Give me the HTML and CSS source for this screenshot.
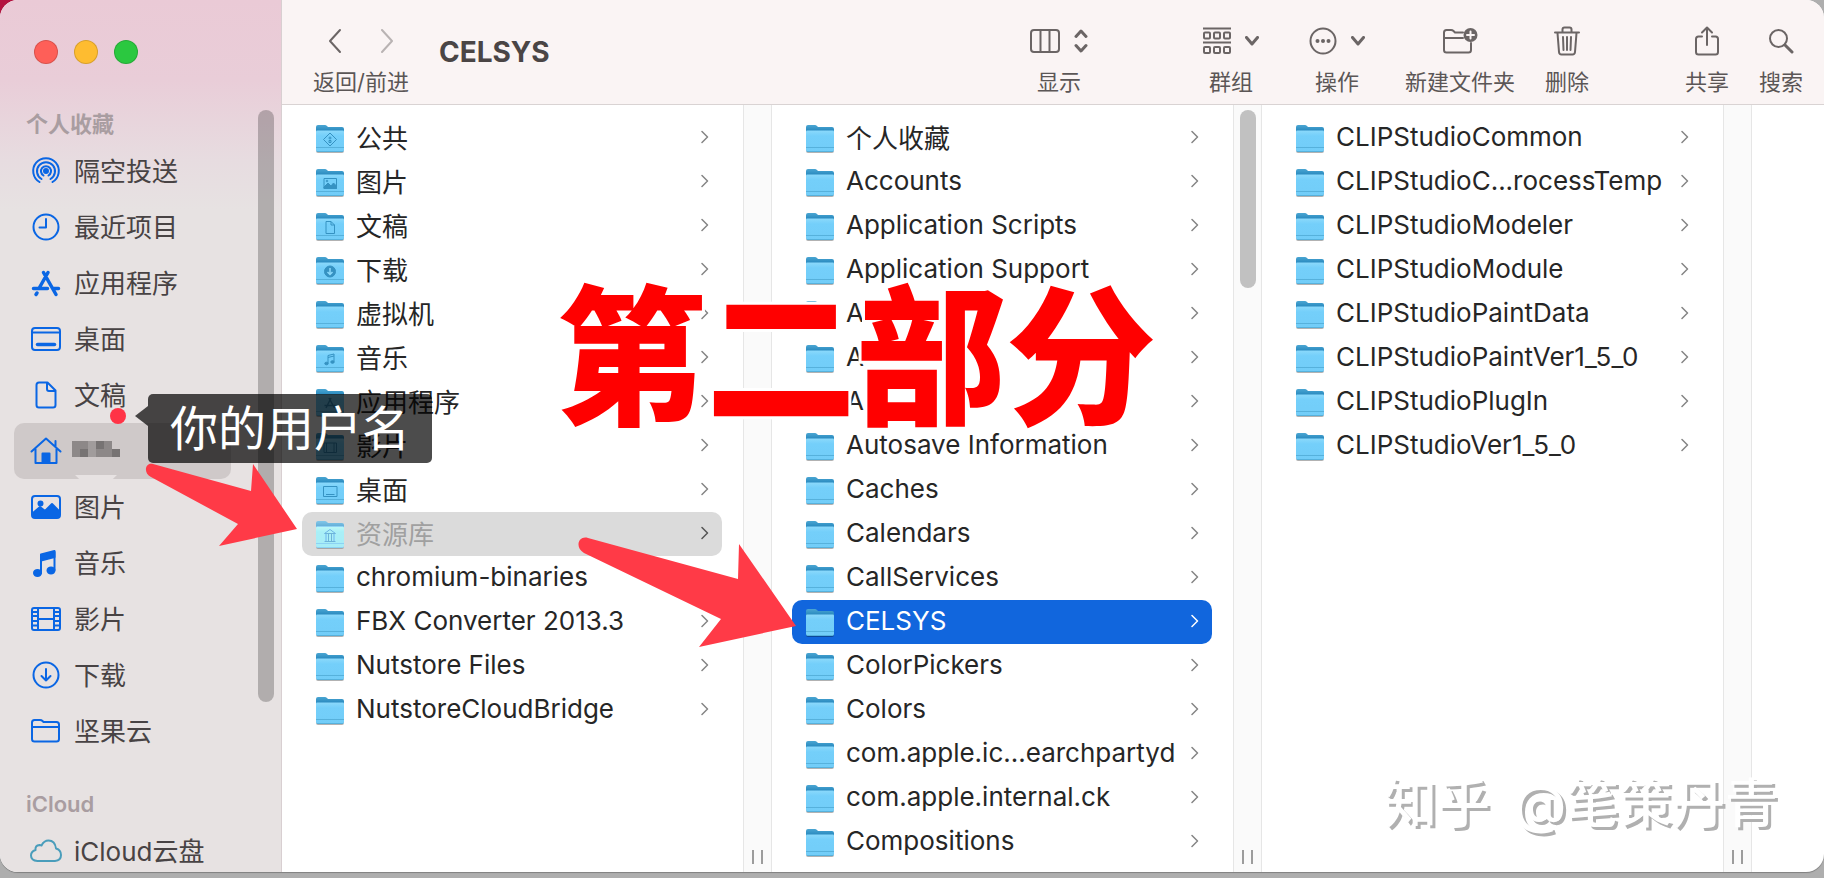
FILE: index.html
```html
<!DOCTYPE html>
<html lang="zh-CN">
<head>
    <meta charset="utf-8">
    <title>CELSYS</title>
    <link rel="stylesheet" href="styles.css">
</head>
<body>
    <!-- icons -->
    <svg class="defs" width="0" height="0" aria-hidden="true">
        <defs>
            <linearGradient id="front" x1="0" y1="0" x2="0" y2="1">
                <stop offset="0" stop-color="#8bd9fb"/>
                <stop offset=".25" stop-color="#74cffa"/>
                <stop offset="1" stop-color="#72cdf8"/>
            </linearGradient>
            <linearGradient id="back" x1="0" y1="0" x2="0" y2="1">
                <stop offset="0" stop-color="#4ba6d3"/>
                <stop offset="1" stop-color="#1579b3"/>
            </linearGradient>
        </defs>
        <symbol id="folder" viewBox="0 0 30 30">
            <rect x="1" y="8" width="28" height="21" rx="2" fill="#000" opacity=".3"/>
            <path d="M1 3q0-2 2-2h7q1 0 2 1l1 1h14q2 0 2 2v5H1z" fill="url(#back)"/>
            <path d="M1 7.500q0-1 1-1h26q1 0 1 1V26q0 2-2 2H3q-2 0-2-2z" fill="url(#front)"/>
            <path d="M1 23.500h28M2 27.500h26" stroke="#4fa9d4" stroke-width=".8"/>
        </symbol>
        <symbol id="b-public" viewBox="0 0 30 30"><path d="M15 9l6.500 6.500L15 22l-6.500-6.500z"/><circle cx="15" cy="14" r="1"/><path d="M14 16.500h2v2h-2z"/></symbol>
        <symbol id="b-pic" viewBox="0 0 30 30"><path d="M9 10.500h12.500v10H9z"/><path d="M9 19l4-4 3 3 2.500-3 3 3v2.500H9z" fill="#3592c2"/><circle cx="12" cy="13" r=".8"/></symbol>
        <symbol id="b-doc" viewBox="0 0 30 30"><path d="M11 9.500h5l3.500 3.500v8.500H11zM16 9.500V13h3.500"/></symbol>
        <symbol id="b-down" viewBox="0 0 30 30"><circle cx="15" cy="15.500" r="5.500" fill="#3592c2"/><path d="M15 12v6M12.500 16l2.500 2.500 2.500-2.500" stroke="#8bd9fb" stroke-width="1.500"/></symbol>
        <symbol id="b-music" viewBox="0 0 30 30"><path d="M13 19v-7.500l6-1.500v7.500M13 13.500l6-1.500"/><ellipse cx="11.500" cy="19.500" rx="1.700" ry="1.300" fill="#3592c2"/><ellipse cx="17.500" cy="18" rx="1.700" ry="1.300" fill="#3592c2"/></symbol>
        <symbol id="b-app" viewBox="0 0 30 30"><path d="M16 10l-5 10M14 10l5.500 10M9.500 17.500h11" stroke-width="1.500"/></symbol>
        <symbol id="b-movie" viewBox="0 0 30 30"><path d="M9 11h12.500v9.500H9zM11.500 11v9.500M19 11v9.500"/></symbol>
        <symbol id="b-desk" viewBox="0 0 30 30"><path d="M8.500 10.500h13.500v10H8.500zM11 18.500h8.500"/></symbol>
        <symbol id="b-lib" viewBox="0 0 30 30"><path d="M9.500 13.500l5.500-4 5.500 4zM11 14v7M13.500 14v7M16.500 14v7M19 14v7M9.500 21.500h11"/></symbol>
        <symbol id="chev" viewBox="0 0 8 14"><path d="M1 1.500L6.500 7 1 12.500" fill="none" stroke="currentColor" stroke-width="1.500" stroke-linecap="round" stroke-linejoin="round"/></symbol>
        <symbol id="caret" viewBox="0 0 14 10"><path d="M1.500 1.500L7 8l5.500-6.500" fill="none" stroke="currentColor" stroke-width="3" stroke-linecap="round" stroke-linejoin="round"/></symbol>
    </svg>

    <div class="window">
        <aside class="sidebar">
            <div class="lights">
                <button class="light red" aria-label="关闭"></button>
                <button class="light yellow" aria-label="最小化"></button>
                <button class="light green" aria-label="全屏"></button>
            </div>
            <nav class="places">
                <h2>个人收藏</h2>
                <a href="#"><svg viewBox="0 0 32 32"><circle cx="16" cy="16" r="2" class="fill"/><path d="M13.500 20.500a5 5 0 1 1 5 0M11.500 24a9 9 0 1 1 9 0M9.500 27a12.800 12.800 0 1 1 13 0"/></svg>隔空投送</a>
                <a href="#"><svg viewBox="0 0 32 32"><circle cx="16" cy="16" r="12.500"/><path d="M16 8v8.500H9.500"/></svg>最近项目</a>
                <a href="#"><svg viewBox="0 0 32 32"><path d="M18 5.500L9.500 20.500M7 26l-1 1.500M13.500 5.500L26 27.500M3.500 21.500h14M23.500 21.500h5" stroke-width="3.500"/></svg>应用程序</a>
                <a href="#"><svg viewBox="0 0 32 32"><rect x="2" y="5" width="28" height="22" rx="3"/><path d="M2 9.500h28"/><path d="M7.500 21.500h17" stroke-width="3.500"/></svg>桌面</a>
                <a href="#"><svg viewBox="0 0 32 32"><path d="M9 3.500h8.500l8 8V26q0 2.500-2.500 2.500H9Q6.500 28.500 6.500 26V6Q6.500 3.500 9 3.500zM17 4v6q0 2 2 2h6"/></svg>文稿</a>
                <a href="#" class="current" aria-label="个人"><svg viewBox="0 0 32 32"><path d="M1.500 16.500L16 3.500l14.500 13M5.500 14v14h21V14M25.500 11V6"/><path d="M12.500 28v-9.500h7V28z" class="fill"/></svg><span class="mosaic"><i></i><i></i><i></i><i></i><i></i><i></i><i></i><i></i><i></i><i></i><i></i><i></i></span></a>
                <a href="#"><svg viewBox="0 0 32 32"><rect x="2" y="5" width="28" height="22" rx="3"/><circle cx="10.500" cy="12.500" r="2" class="fill"/><path d="M3 25v-3l7-6 5 4 7-7 7 7v5q0 1-1 1H4q-1 0-1-1z" class="fill"/></svg>图片</a>
                <a href="#"><svg viewBox="0 0 32 32"><path d="M11 26V8.500L24.500 5v18"/><path d="M11 7.500L24.500 4v6L11 13.500z" class="fill"/><ellipse cx="7.500" cy="26" rx="3.500" ry="3" class="fill"/><ellipse cx="21" cy="23.500" rx="3.500" ry="3" class="fill"/></svg>音乐</a>
                <a href="#"><svg viewBox="0 0 32 32"><rect x="2" y="5" width="28" height="22" rx="2"/><path d="M8 5v22M24 5v22M8 16h16M2 9h6M2 13h6M2 18h6M2 22.500h6M24 9h6M24 13h6M24 18h6M24 22.500h6"/></svg>影片</a>
                <a href="#"><svg viewBox="0 0 32 32"><circle cx="16" cy="16" r="12.500"/><path d="M16 10v11.500M11.500 17l4.500 4.500 4.500-4.500"/></svg>下载</a>
                <a href="#"><svg viewBox="0 0 32 32"><path d="M2 24V7.500Q2 5 4.500 5H10q1.500 0 2.500 1l1 1h13q2.500 0 2.500 2.500V24q0 2.500-2.500 2.500h-22Q2 26.500 2 24zM2 12h27"/></svg>坚果云</a>
                <h2 class="cloud-head">iCloud</h2>
                <a href="#"><svg viewBox="0 0 32 32" class="teal"><path d="M7.500 26Q1 25.500 1 20.500q0-4 4.500-5.500-.5-4.500 4-5 1.500 0 2 .5Q14 5.500 18.500 5.500q6.500 0 7.500 8 5 1.500 5 6.500 0 5.500-6 6z"/></svg>iCloud云盘</a>
            </nav>
            <div class="scroll"></div>
        </aside>

        <main class="main">
            <header class="toolbar">
                <div class="nav">
                    <div class="arrows">
                        <button aria-label="返回"><svg width="14" height="26" viewBox="0 0 14 26"><path d="M12 2L2 13l10 11"/></svg></button>
                        <button aria-label="前进" class="off"><svg width="14" height="26" viewBox="0 0 14 26"><path d="M2 2l10 11L2 24"/></svg></button>
                    </div>
                    <span class="label">返回/前进</span>
                </div>
                <h1>CELSYS</h1>
                <button class="tool menu">
                    <span class="ico"><svg width="30" height="28" viewBox="0 0 30 28"><rect x="1" y="3" width="28" height="22" rx="3"/><path d="M10.500 3v22M19.500 3v22"/></svg><svg width="14" height="28" viewBox="0 0 14 28"><path d="M2 9.500L7 4l5 5.500M2 18.500L7 24l5-5.500" class="bold"/></svg></span>
                    <span class="label">显示</span>
                </button>
                <button class="tool menu apart">
                    <span class="ico"><svg width="28" height="28" viewBox="0 0 28 28"><path d="M0 1.500h28M0 15.500h28"/><rect x="1" y="5.500" width="6" height="6" rx="1"/><rect x="11" y="5.500" width="6" height="6" rx="1"/><rect x="21" y="5.500" width="6" height="6" rx="1"/><rect x="1" y="20" width="6" height="6" rx="1"/><rect x="11" y="20" width="6" height="6" rx="1"/><rect x="21" y="20" width="6" height="6" rx="1"/></svg><svg width="14" height="10"><use href="#caret"/></svg></span>
                    <span class="label">群组</span>
                </button>
                <button class="tool menu">
                    <span class="ico"><svg width="28" height="28" viewBox="0 0 28 28"><circle cx="14" cy="14" r="12.500"/><g class="dots"><circle cx="8.500" cy="14" r="2"/><circle cx="14" cy="14" r="2"/><circle cx="19.500" cy="14" r="2"/></g></svg><svg width="14" height="10"><use href="#caret"/></svg></span>
                    <span class="label">操作</span>
                </button>
                <button class="tool">
                    <span class="ico"><svg width="36" height="28" viewBox="0 0 36 28"><path d="M29 16v7q0 2.500-2.500 2.500h-22Q2 25.500 2 23V5.500Q2 3 4.500 3H9q1.500 0 2.500 1l1.500 1.500h8M2 11h19"/><circle cx="28.500" cy="8" r="7" class="dots"/><path d="M28.500 4.500v7M25 8h7" class="plus"/></svg></span>
                    <span class="label">新建文件夹</span>
                </button>
                <button class="tool">
                    <span class="ico"><svg width="26" height="30" viewBox="0 0 26 30"><path d="M1 6.500h24M8.500 6V3.500q0-2 2-2h5q2 0 2 2V6M3.500 7l1.500 19q.2 2.500 2.500 2.500h11q2.300 0 2.500-2.500L22.500 7M9 11l.5 13M13 11v13M17 11l-.5 13"/></svg></span>
                    <span class="label">删除</span>
                </button>
                <button class="tool apart">
                    <span class="ico"><svg width="26" height="30" viewBox="0 0 26 30"><path d="M8 10.500H4.500Q2 10.500 2 13v13q0 2.500 2.500 2.500h17Q24 28.500 24 26V13q0-2.500-2.500-2.500H18M13 19V2M8 6.500l5-5 5 5"/></svg></span>
                    <span class="label">共享</span>
                </button>
                <button class="tool">
                    <span class="ico"><svg width="26" height="26" viewBox="0 0 26 26"><circle cx="10.500" cy="10.500" r="8.500"/><path d="M17 17l7 7" class="bold"/></svg></span>
                    <span class="label">搜索</span>
                </button>
            </header>

            <div class="columns">
                <section class="column">
                    <ul>
                        <li><a href="#"><svg class="folder"><use href="#folder"/><use href="#b-public"/></svg>公共<svg class="chev"><use href="#chev"/></svg></a></li>
                        <li><a href="#"><svg class="folder"><use href="#folder"/><use href="#b-pic"/></svg>图片<svg class="chev"><use href="#chev"/></svg></a></li>
                        <li><a href="#"><svg class="folder"><use href="#folder"/><use href="#b-doc"/></svg>文稿<svg class="chev"><use href="#chev"/></svg></a></li>
                        <li><a href="#"><svg class="folder"><use href="#folder"/><use href="#b-down"/></svg>下载<svg class="chev"><use href="#chev"/></svg></a></li>
                        <li><a href="#"><svg class="folder"><use href="#folder"/></svg>虚拟机<svg class="chev"><use href="#chev"/></svg></a></li>
                        <li><a href="#"><svg class="folder"><use href="#folder"/><use href="#b-music"/></svg>音乐<svg class="chev"><use href="#chev"/></svg></a></li>
                        <li><a href="#"><svg class="folder"><use href="#folder"/><use href="#b-app"/></svg>应用程序<svg class="chev"><use href="#chev"/></svg></a></li>
                        <li><a href="#"><svg class="folder"><use href="#folder"/><use href="#b-movie"/></svg>影片<svg class="chev"><use href="#chev"/></svg></a></li>
                        <li><a href="#"><svg class="folder"><use href="#folder"/><use href="#b-desk"/></svg>桌面<svg class="chev"><use href="#chev"/></svg></a></li>
                        <li><a href="#" class="open"><svg class="folder"><use href="#folder"/><use href="#b-lib"/></svg>资源库<svg class="chev"><use href="#chev"/></svg></a></li>
                        <li><a href="#"><svg class="folder"><use href="#folder"/></svg>chromium-binaries<svg class="chev"><use href="#chev"/></svg></a></li>
                        <li><a href="#"><svg class="folder"><use href="#folder"/></svg>FBX Converter 2013.3<svg class="chev"><use href="#chev"/></svg></a></li>
                        <li><a href="#"><svg class="folder"><use href="#folder"/></svg>Nutstore Files<svg class="chev"><use href="#chev"/></svg></a></li>
                        <li><a href="#"><svg class="folder"><use href="#folder"/></svg>NutstoreCloudBridge<svg class="chev"><use href="#chev"/></svg></a></li>
                    </ul>
                    <div class="gutter"><span class="grip"></span></div>
                </section>

                <section class="column">
                    <ul>
                        <li><a href="#"><svg class="folder"><use href="#folder"/></svg>个人收藏<svg class="chev"><use href="#chev"/></svg></a></li>
                        <li><a href="#"><svg class="folder"><use href="#folder"/></svg>Accounts<svg class="chev"><use href="#chev"/></svg></a></li>
                        <li><a href="#"><svg class="folder"><use href="#folder"/></svg>Application Scripts<svg class="chev"><use href="#chev"/></svg></a></li>
                        <li><a href="#"><svg class="folder"><use href="#folder"/></svg>Application Support<svg class="chev"><use href="#chev"/></svg></a></li>
                        <li><a href="#"><svg class="folder"><use href="#folder"/></svg>A<svg class="chev"><use href="#chev"/></svg></a></li>
                        <li><a href="#"><svg class="folder"><use href="#folder"/></svg>A<svg class="chev"><use href="#chev"/></svg></a></li>
                        <li><a href="#"><svg class="folder"><use href="#folder"/></svg>A<svg class="chev"><use href="#chev"/></svg></a></li>
                        <li><a href="#"><svg class="folder"><use href="#folder"/></svg>Autosave Information<svg class="chev"><use href="#chev"/></svg></a></li>
                        <li><a href="#"><svg class="folder"><use href="#folder"/></svg>Caches<svg class="chev"><use href="#chev"/></svg></a></li>
                        <li><a href="#"><svg class="folder"><use href="#folder"/></svg>Calendars<svg class="chev"><use href="#chev"/></svg></a></li>
                        <li><a href="#"><svg class="folder"><use href="#folder"/></svg>CallServices<svg class="chev"><use href="#chev"/></svg></a></li>
                        <li><a href="#" class="selected"><svg class="folder"><use href="#folder"/></svg>CELSYS<svg class="chev"><use href="#chev"/></svg></a></li>
                        <li><a href="#"><svg class="folder"><use href="#folder"/></svg>ColorPickers<svg class="chev"><use href="#chev"/></svg></a></li>
                        <li><a href="#"><svg class="folder"><use href="#folder"/></svg>Colors<svg class="chev"><use href="#chev"/></svg></a></li>
                        <li><a href="#"><svg class="folder"><use href="#folder"/></svg>com.apple.ic...earchpartyd<svg class="chev"><use href="#chev"/></svg></a></li>
                        <li><a href="#"><svg class="folder"><use href="#folder"/></svg>com.apple.internal.ck<svg class="chev"><use href="#chev"/></svg></a></li>
                        <li><a href="#"><svg class="folder"><use href="#folder"/></svg>Compositions<svg class="chev"><use href="#chev"/></svg></a></li>
                    </ul>
                    <div class="gutter"><span class="thumb"></span><span class="grip"></span></div>
                </section>

                <section class="column">
                    <ul>
                        <li><a href="#"><svg class="folder"><use href="#folder"/></svg>CLIPStudioCommon<svg class="chev"><use href="#chev"/></svg></a></li>
                        <li><a href="#"><svg class="folder"><use href="#folder"/></svg>CLIPStudioC...rocessTemp<svg class="chev"><use href="#chev"/></svg></a></li>
                        <li><a href="#"><svg class="folder"><use href="#folder"/></svg>CLIPStudioModeler<svg class="chev"><use href="#chev"/></svg></a></li>
                        <li><a href="#"><svg class="folder"><use href="#folder"/></svg>CLIPStudioModule<svg class="chev"><use href="#chev"/></svg></a></li>
                        <li><a href="#"><svg class="folder"><use href="#folder"/></svg>CLIPStudioPaintData<svg class="chev"><use href="#chev"/></svg></a></li>
                        <li><a href="#"><svg class="folder"><use href="#folder"/></svg>CLIPStudioPaintVer1_5_0<svg class="chev"><use href="#chev"/></svg></a></li>
                        <li><a href="#"><svg class="folder"><use href="#folder"/></svg>CLIPStudioPlugIn<svg class="chev"><use href="#chev"/></svg></a></li>
                        <li><a href="#"><svg class="folder"><use href="#folder"/></svg>CLIPStudioVer1_5_0<svg class="chev"><use href="#chev"/></svg></a></li>
                    </ul>
                    <div class="gutter"><span class="grip"></span></div>
                </section>
            </div>
        </main>
    </div>

    <!-- annotations -->
    <span class="dot"></span>
    <div class="tip">你的用户名</div>
    <svg class="arrow first" width="156" height="86" viewBox="0 0 156 86"><path d="M10 2L108 29l2-27 44 65-78 17 19-22L8 15C0 11 2 0 10 2z"/></svg>
    <svg class="arrow second" width="222" height="114" viewBox="0 0 222 114"><path d="M12 2l150 41 1-35 57 82-97 21 22-28L8 17C-2 11 3-1 12 2z"/></svg>
    <div class="part">第二部分</div>
    <div class="watermark"><span>知乎</span><span>@笔策丹青</span></div>
</body>
</html>
```

FILE: styles.css
```css
* {
    box-sizing: border-box;
}

body {
    margin: 0;
    height: 100vh;
    padding-bottom: 6px;
    position: relative;
    overflow: hidden;
    background: linear-gradient(#b3123f, #b3123f) 0 0 / 40px 40px no-repeat, #aeaeae;
    font-family: Inter, "Noto Sans CJK SC", sans-serif;
    font-size: 26px;
    color: #262626;
}

.defs {
    position: absolute;
}

a {
    color: inherit;
    text-decoration: none;
}

button {
    padding: 0;
    border: 0;
    background: none;
    font: inherit;
    color: inherit;
}

h1, h2, ul {
    margin: 0;
    padding: 0;
}

.window {
    display: flex;
    height: 100%;
    overflow: hidden;
    border-radius: 18px;
    background: #fff;
    box-shadow: 0 1px 1px #808080;
}

/* sidebar */
.sidebar {
    position: relative;
    flex: none;
    width: 282px;
    border-right: 1px solid #d8cfd1;
    background: linear-gradient(#eacad6 0, #e9cdd8 80px, #e7dce0 160px, #e7e2e2 210px);
    color: #484344;
}

.lights {
    display: flex;
    gap: 16px;
    height: 105px;
    padding: 40px 34px;
}

.light {
    width: 24px;
    height: 24px;
    border-radius: 50%;
    border: 1px solid rgba(0, 0, 0, .15);
}

.red { background: #fe5f58; }
.yellow { background: #febc30; }
.green { background: #2bc840; }

.places {
    padding: 0 50px 0 14px;
}

.places h2 {
    padding-left: 12px;
    font-size: 22px;
    line-height: 38px;
    font-weight: 600;
    color: #a99da1;
}

.places .cloud-head {
    margin-top: 26px;
}

.places a {
    display: flex;
    align-items: center;
    gap: 12px;
    height: 56px;
    padding: 0 0 4px 16px;
    border-radius: 10px;
    white-space: nowrap;
}

.places .current {
    position: relative;
    background: #cfc9c9;
}

.places .current::after {
    content: "";
    position: absolute;
    left: 61px;
    bottom: 0;
    width: 42px;
    height: 4px;
    background: #e7e2e2;
    clip-path: polygon(0 0, 100% 0, 90% 100%, 10% 100%);
}

.places svg {
    width: 32px;
    height: 32px;
    margin-top: 4px;
    fill: none;
    stroke: #0a66e4;
    stroke-width: 2;
    stroke-linecap: round;
    stroke-linejoin: round;
}

.places .fill {
    fill: #0a66e4;
}

.places .teal {
    stroke: #4a9dbb;
}

.mosaic {
    display: grid;
    grid-template-columns: repeat(6, 8px);
    grid-auto-rows: 8px;
    margin-left: -2px;
}

.mosaic i { background: #8d8888; }
.mosaic i:nth-child(3n) { background: #a19c9c; }
.mosaic i:nth-child(4n) { background: #777373; }
.mosaic i:nth-child(6) { background: none; }

.scroll {
    position: absolute;
    top: 110px;
    right: 7px;
    width: 16px;
    height: 592px;
    border-radius: 8px;
    background: rgba(0, 0, 0, .23);
}

/* toolbar */
.main {
    flex: 1;
    min-width: 0;
    display: flex;
    flex-direction: column;
}

.toolbar {
    display: flex;
    gap: 30px;
    height: 105px;
    padding: 0 21px 0 31px;
    border-bottom: 1px solid #d9d3d3;
    background: #faf4f4;
    color: #5b5656;
}

.toolbar svg {
    fill: none;
    stroke: #6b6565;
    stroke-width: 2;
    stroke-linecap: round;
    stroke-linejoin: round;
    color: #6b6565;
}

.toolbar .bold {
    stroke-width: 3;
}

.toolbar .dots {
    fill: #6b6565;
    stroke: none;
}

.toolbar .plus {
    stroke: #faf4f4;
}

.nav, .tool {
    display: flex;
    flex-direction: column;
    align-items: center;
    justify-content: flex-start;
    padding-top: 21px;
}

.arrows, .ico {
    display: flex;
    align-items: center;
    justify-content: center;
    gap: 14px;
    height: 42px;
}

.arrows {
    gap: 38px;
    width: 100%;
}

.arrows button {
    display: flex;
}

.off {
    opacity: .45;
}

.label {
    font-size: 22px;
    line-height: 44px;
    white-space: nowrap;
}

h1 {
    flex: 1;
    font-size: 28px;
    line-height: 104px;
    font-weight: 700;
    color: #4a4545;
}

.menu {
    width: 76px;
}

.apart {
    margin-left: 66px;
}

/* file columns */
.columns {
    flex: 1;
    min-height: 0;
    display: flex;
    overflow: hidden;
}

.column {
    flex: none;
    display: flex;
    width: 490px;
}

.column ul {
    flex: 1;
    padding: 11px 21px 0 20px;
    list-style: none;
}

.column a {
    display: flex;
    align-items: center;
    height: 44px;
    padding: 0 13px 3px;
    border-radius: 10px;
    white-space: nowrap;
}

.folder {
    width: 30px;
    height: 30px;
    margin: 4px 11px 0 0;
    fill: none;
    stroke: #3592c2;
    stroke-width: 1;
}

.folder use:first-child {
    stroke: none;
}

.chev {
    width: 8px;
    height: 14px;
    margin-left: auto;
    color: #858585;
}

.open {
    background: #dbdbdb;
    color: #a0a0a0;
}

.open .folder {
    filter: saturate(.8) brightness(1.2);
    opacity: .8;
}

.open .chev {
    color: #555;
}

.selected {
    background: #1166dd;
    color: #fff;
}

.selected .chev {
    color: #fff;
}

.gutter {
    display: flex;
    flex-direction: column;
    align-items: center;
    width: 29px;
    padding: 5px 0 8px;
    border: solid #e6e6e6;
    border-width: 0 1px;
    background: #fafafa;
}

.thumb {
    width: 16px;
    height: 178px;
    border-radius: 8px;
    background: #c1c1c1;
}

.grip {
    width: 11px;
    height: 14px;
    margin-top: auto;
    border: solid #9c9c9c;
    border-width: 0 2px;
}

/* annotations */
.dot {
    position: absolute;
    left: 110px;
    top: 408px;
    width: 16px;
    height: 16px;
    border-radius: 50%;
    background: #ff3346;
}

.tip {
    position: absolute;
    left: 148px;
    top: 394px;
    padding: 0 22px;
    border-radius: 5px;
    background: rgba(0, 0, 0, .7);
    color: #fff;
    font-size: 48px;
    line-height: 69px;
}

.tip::before {
    content: "";
    position: absolute;
    left: -13px;
    top: 12px;
    border: solid transparent;
    border-width: 10px 13px 10px 0;
    border-right-color: rgba(0, 0, 0, .7);
}

.arrow {
    position: absolute;
    fill: #ff3a47;
}

.first {
    left: 143px;
    top: 462px;
}

.second {
    left: 576px;
    top: 536px;
}

.part {
    position: absolute;
    left: 556px;
    top: 284px;
    font-size: 150px;
    line-height: 150px;
    font-weight: 900;
    color: #f00;
    -webkit-text-stroke: 6px #fff;
    paint-order: stroke fill;
}

.watermark {
    position: absolute;
    right: 46px;
    bottom: 36px;
    display: flex;
    gap: 24px;
    font-size: 53px;
    line-height: 76px;
    font-weight: 500;
    color: #fff;
    text-shadow: 3px 3px 0 #b0b0b0;
}
```
